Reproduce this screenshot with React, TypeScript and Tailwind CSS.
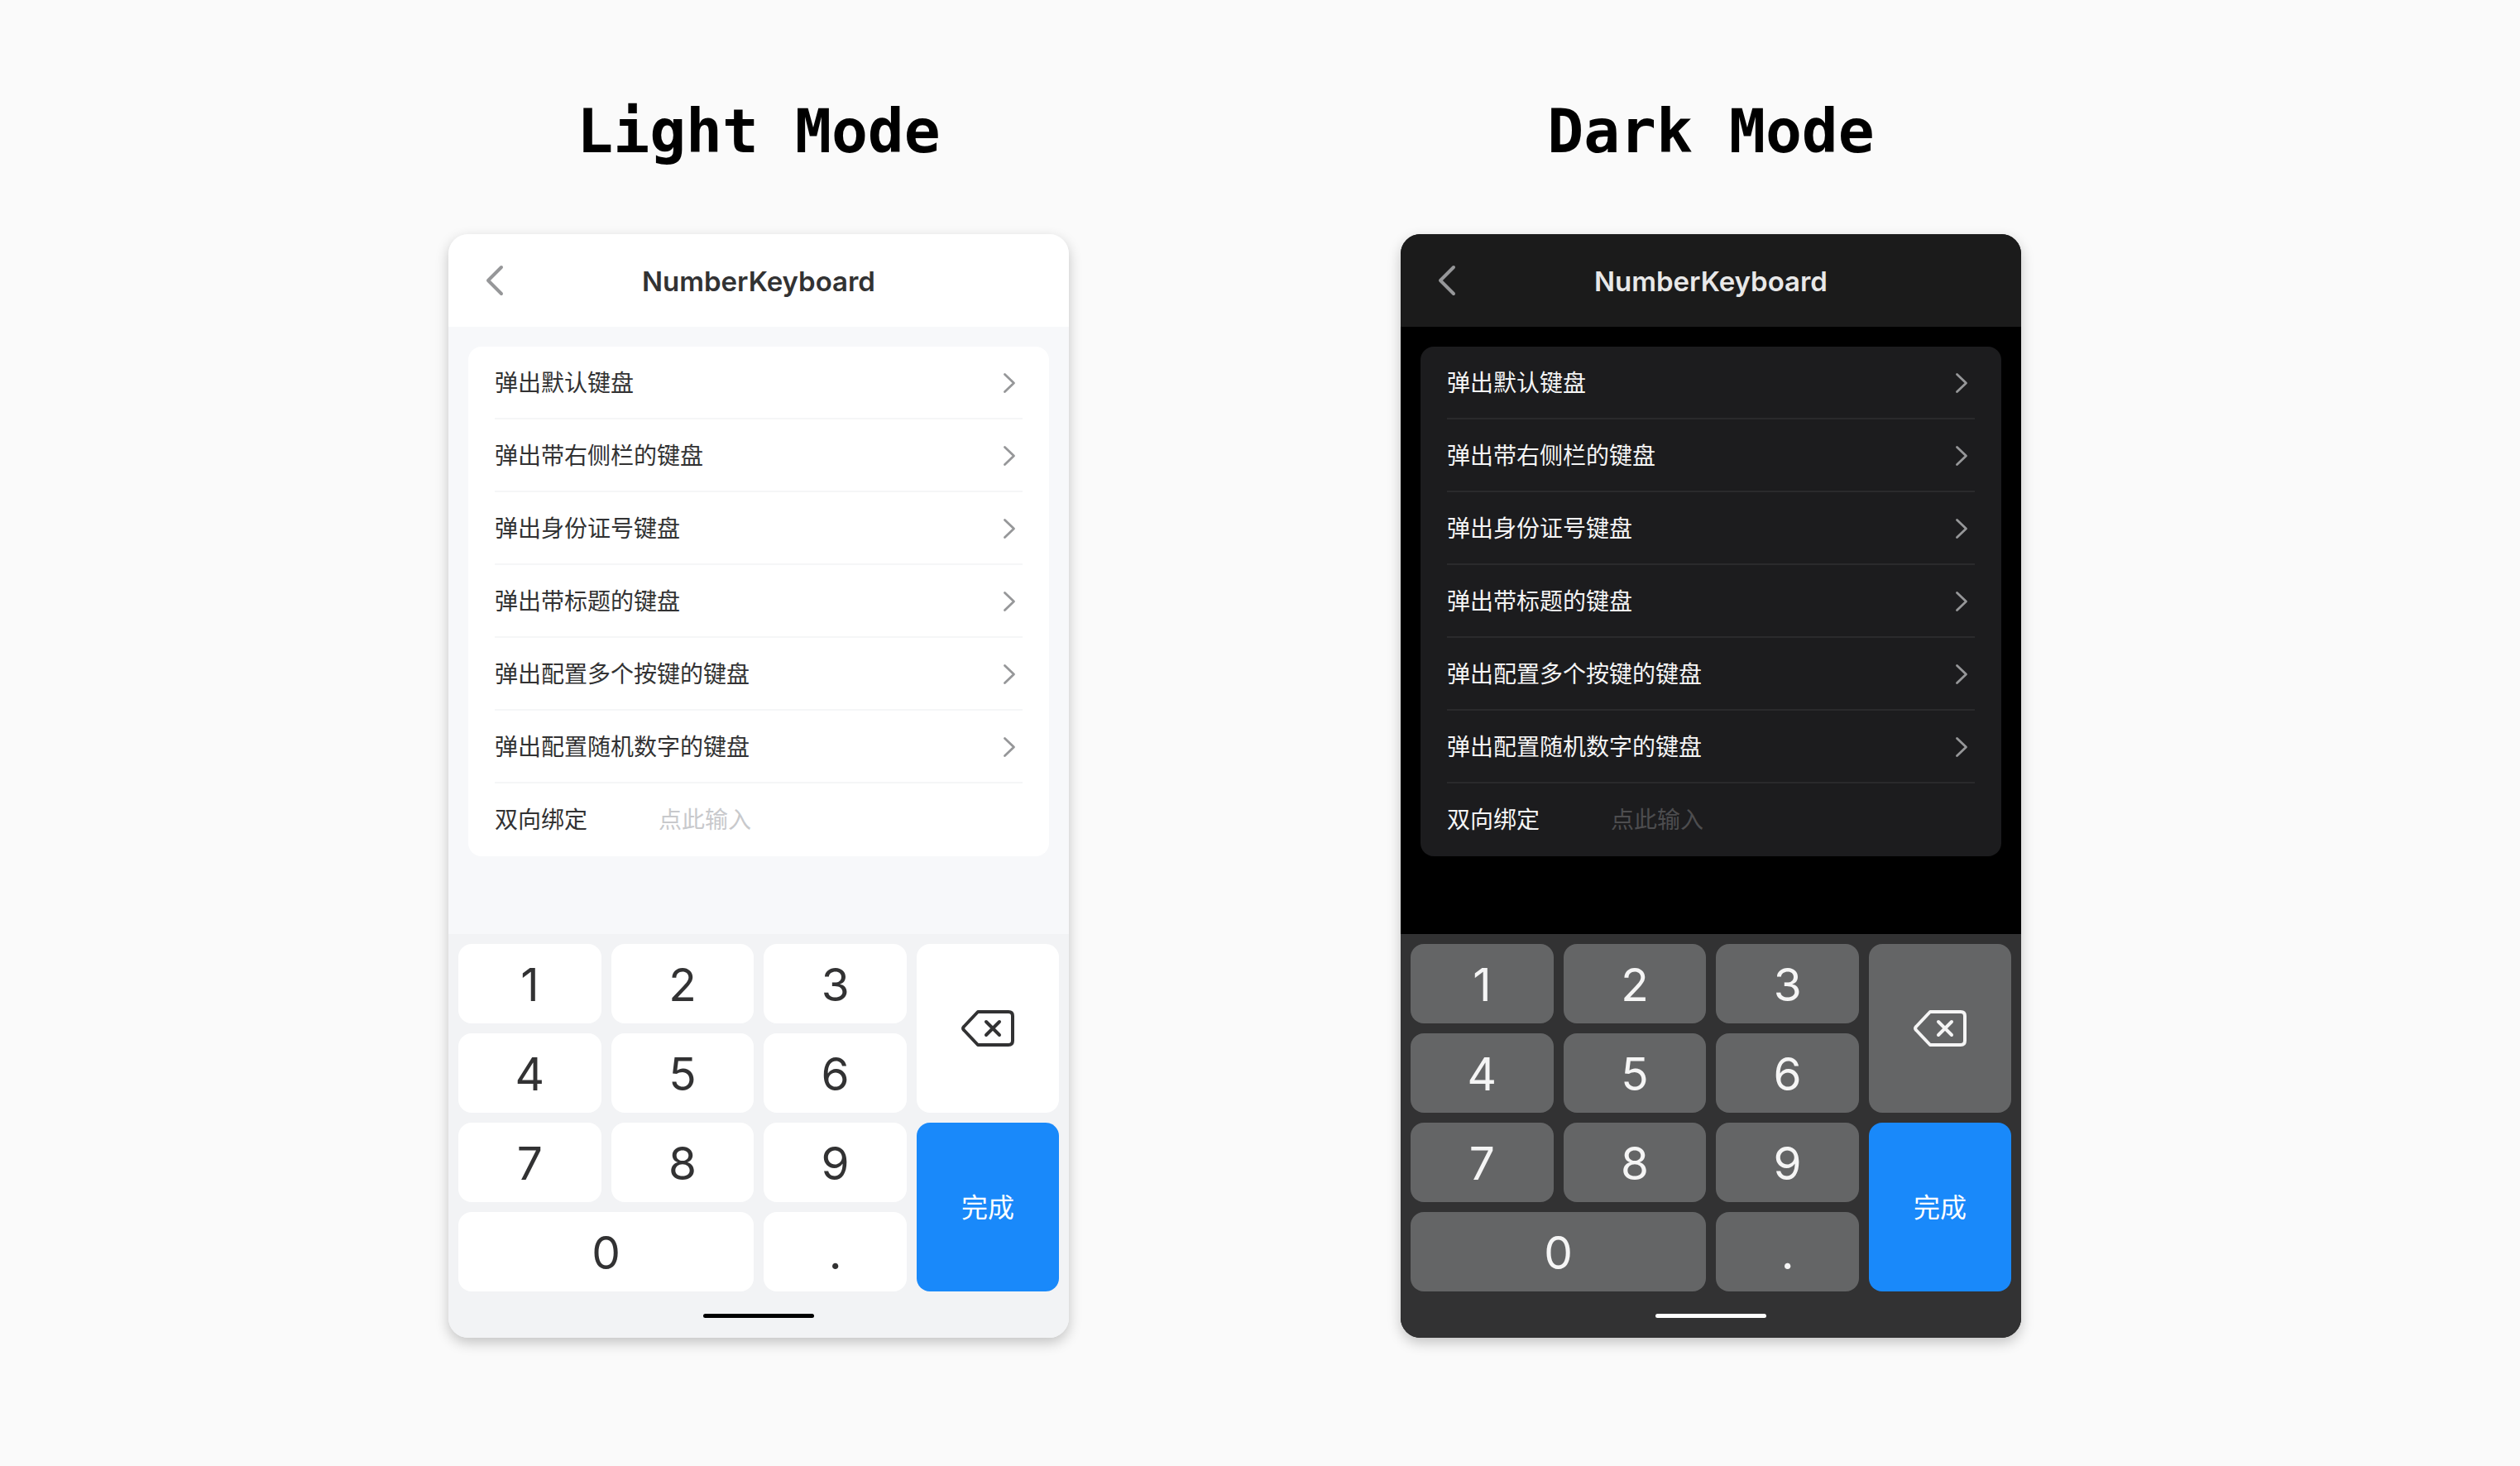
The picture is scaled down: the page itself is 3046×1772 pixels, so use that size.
import { useState } from 'react';
import clsx from 'clsx';

interface PhoneProps {
  dark?: boolean;
}

const demos = [
  '弹出默认键盘',
  '弹出带右侧栏的键盘',
  '弹出身份证号键盘',
  '弹出带标题的键盘',
  '弹出配置多个按键的键盘',
  '弹出配置随机数字的键盘',
];

const keys = ['1', '2', '3', '4', '5', '6', '7', '8', '9', '0', '.'];

function BackIcon() {
  return (
    <svg className="h-10 w-6" viewBox="0 0 24 40" fill="none" stroke="currentColor" strokeWidth="4" strokeLinecap="round" strokeLinejoin="round">
      <path d="M20 4L4 20l16 16" />
    </svg>
  );
}

function ArrowIcon() {
  return (
    <svg className="size-8 shrink-0" viewBox="0 0 32 32" fill="none" stroke="currentColor" strokeWidth="2.8" strokeLinecap="round" strokeLinejoin="round">
      <path d="M10.5 5.5L21.5 16l-11 10.5" />
    </svg>
  );
}

function DeleteIcon() {
  return (
    <svg className="h-11 w-16" viewBox="0 0 64 44" fill="none" stroke="currentColor" strokeWidth="4" strokeLinecap="round" strokeLinejoin="round">
      <path d="M20 2h37q5 0 5 5v30q0 5-5 5H20L3 24q-2-2 0-4z" />
      <path d="M30 14l16 16M46 14L30 30" />
    </svg>
  );
}

function NumberKeyboard({ dark, onInput, onDelete }: PhoneProps & { onInput: (key: string) => void; onDelete: () => void }) {
  const keyClass = dark ? 'bg-[#646566] text-[#f5f5f5]' : 'bg-white text-[#323233]';

  return (
    <div className={clsx('px-3 pt-3 pb-6', dark ? 'bg-[#323233]' : 'bg-[#f2f3f5]')}>
      <div className="flex gap-3">
        <div className="grid flex-3 grid-cols-3 gap-3">
          {keys.map((key) => (
            <button
              key={key}
              type="button"
              onClick={() => onInput(key)}
              className={clsx('h-24 rounded-2xl pt-[2px] text-[55px] leading-none', key === '0' && 'col-span-2', keyClass)}
            >
              {key}
            </button>
          ))}
        </div>
        <div className="grid w-[172px] grid-rows-2 gap-3">
          <button
            type="button"
            aria-label="删除"
            onClick={onDelete}
            className={clsx('flex items-center justify-center rounded-2xl', keyClass)}
          >
            <DeleteIcon />
          </button>
          <button type="button" className="rounded-2xl bg-[#1989fa] pt-[2px] text-[32px] leading-none text-white">
            完成
          </button>
        </div>
      </div>
      <div className={clsx('mx-auto mt-[27px] h-[5px] w-[134px] rounded-full', dark ? 'bg-white' : 'bg-black')} />
    </div>
  );
}

function Phone({ dark }: PhoneProps) {
  const [value, setValue] = useState('');
  const id = dark ? 'binding-dark' : 'binding-light';
  const border = dark ? 'border-[#2a2a2c]' : 'border-[#f5f6f7]';

  return (
    <div
      className={clsx(
        'flex flex-col overflow-hidden rounded-3xl shadow-[0_6px_16px_rgba(0,0,0,0.22)]',
        dark ? 'bg-black text-[#f5f5f5]' : 'bg-[#f7f8fa] text-[#323233]'
      )}
    >
      <header className={clsx('grid h-28 grid-cols-[1fr_auto_1fr] items-center px-11', dark ? 'bg-[#1b1b1b]' : 'bg-white')}>
        <button type="button" aria-label="返回" className="justify-self-start text-[#969799]">
          <BackIcon />
        </button>
        <h2 className={clsx('pt-[2px] text-[33px] leading-none font-semibold', dark && 'text-[#e8e8e8]')}>NumberKeyboard</h2>
      </header>

      <div className="px-6 pt-6 pb-[94px]">
        <div className={clsx('overflow-hidden rounded-2xl px-8 text-[28px] leading-10', dark ? 'bg-[#1c1c1e]' : 'bg-white')}>
          {demos.map((demo) => (
            <button key={demo} type="button" className={clsx('flex h-22 w-full items-center justify-between border-b-2 pt-[2px] text-left', border)}>
              <span>{demo}</span>
              <span className="text-[#969799]">
                <ArrowIcon />
              </span>
            </button>
          ))}
          <div className="flex h-22 items-center">
            <label htmlFor={id} className="w-[198px] shrink-0">
              双向绑定
            </label>
            <input
              id={id}
              readOnly
              value={value}
              placeholder="点此输入"
              className={clsx('min-w-0 flex-1 bg-transparent outline-none', dark ? 'placeholder:text-[#4d4d4f]' : 'placeholder:text-[#c8c9cc]')}
            />
          </div>
        </div>
      </div>

      <NumberKeyboard dark={dark} onInput={(key) => setValue(value + key)} onDelete={() => setValue(value.slice(0, -1))} />
    </div>
  );
}

export default function App() {
  return (
    <main className="flex min-h-screen justify-center gap-[401px] bg-[#fafafa] pt-[111px] pr-[61px] font-[Inter,'Noto_Sans_CJK_SC',sans-serif]">
      <section className="w-[750px]">
        <h1 className="mb-[76px] text-center font-['DejaVu_Sans_Mono',monospace] text-[73px] leading-24 font-bold text-black">Light Mode</h1>
        <Phone />
      </section>
      <section className="w-[750px]">
        <h1 className="mb-[76px] text-center font-['DejaVu_Sans_Mono',monospace] text-[73px] leading-24 font-bold text-black">Dark Mode</h1>
        <Phone dark />
      </section>
    </main>
  );
}
